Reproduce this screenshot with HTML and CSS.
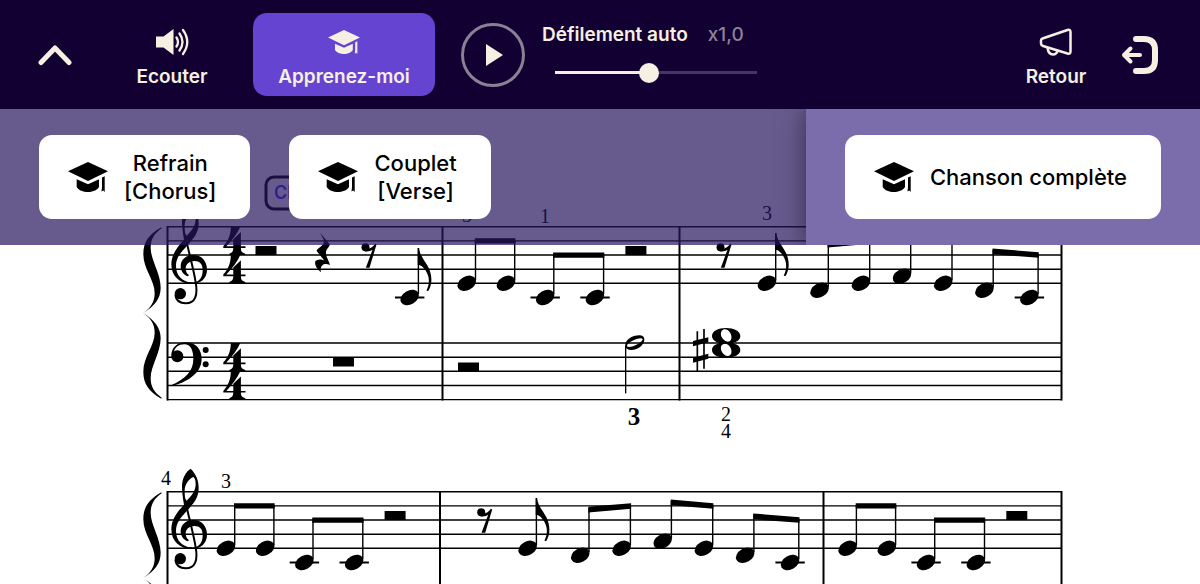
FILE: index.html
```html
<!DOCTYPE html>
<html lang="fr">
<head>
<meta charset="utf-8">
<meta name="viewport" content="width=device-width, initial-scale=1">
<title>Partition</title>
<link rel="stylesheet" href="styles.css">
</head>
<body>
<svg class="defs" width="0" height="0" aria-hidden="true">
  <defs>
    <symbol id="cap" viewBox="0 0 40 30">
      <path d="M0 9.3 20 0 40 9.3 20 19Z"/>
      <path d="M8.7 17.2 20 22.3 31 17.2V25C29 28.6 24 30 20 30 15 30 11 28.6 8.7 25Z"/>
      <path d="M34 15.4 36.7 14.2V30L35.3 28.4 33.5 29.6 34 25Z"/>
    </symbol>
    <ellipse id="head" rx="9.9" ry="6.9" transform="rotate(-29)"/>
    <g id="low"><use href="#head"/><path d="M-14.7-1H14.7V1H-14.7Z"/></g>
    <path id="rest" d="M0 0H21V9H0Z"/>
    <path id="flag" transform="scale(.33333)" d="M-2 0H2C5 35 39 50 39 95 39 110 33 125 29 129L24 128C33 110 35 90 23 70 15 57 7 51 2 51H-2Z"/>
    <g id="rest8" transform="scale(.33333)"><circle cx="12" cy="11" r="12"/><path d="M41 1 45 3 24 73H13L33 19C26 24 16 25 9 23L12 15C25 18 34 11 41 1Z"/></g>
    <path id="four" d="M7.5 0H17C14 7 9 13 3 19.6H10V12.5L17.6 5.2V19.6H22.2V21.3H17.6C17.6 24.500 18.5 26 22 27V28.3H6V27C9 26 10 24.500 10 21.3H0V19.6C5 14 7.500 8 7.500 0Z"/>
    <g id="treble" transform="scale(.33333)">
      <path fill-rule="evenodd" d="M182 26C200 45 206 62 206 85 206 112 192 130 174 149 150 174 138 190 138 212 138 240 155 260 184 262 208 264 218 248 218 226 218 206 209 198 193 198 178 198 168 208 167 218 167 230 171 236 177 240L174 244C160 240 152 228 152 214 152 194 168 180 190 180 214 180 231 198 231 224 231 250 212 267 184 267 150 267 124 244 124 208 124 178 142 156 162 134 158 112 156 92 156 80 156 55 168 34 182 26ZM190 51C176 56 163 75 164 95 164 105 165 115 168 124 185 108 197 92 197 72 197 62 195 54 190 51Z"/>
      <path class="line" stroke-width="6" d="M165 118C175 168 190 218 197 262 204 300 196 325 167 325 148 325 138 314 136 300"/>
      <circle cx="151" cy="296" r="17"/>
    </g>
    <g id="brace" transform="scale(.33333)">
      <path id="half-brace" d="M94 67C55 90 40 112 40 148 40 193 74 225 74 265 74 290 62 310 38 325 75 302 92 280 92 248 92 205 62 165 62 128 62 104 72 86 95 70Z"/>
      <use href="#half-brace" transform="matrix(1 0 0 -1 0 648)"/>
    </g>
    <path id="staff" class="line" stroke-width="1.4" d="M167 0H1062M167 14.2H1062M167 28.3H1062M167 42.5H1062M167 56.6H1062"/>
    <g id="notes-a">
      <use href="#head" x="0" y="283.3"/><use href="#head" x="39.2" y="283.3"/>
      <use href="#low" x="78.4" y="297.5"/><use href="#low" x="128.2" y="297.5"/>
      <path class="line" stroke-width="1.4" d="M8.7 280V240M47.9 280V240M87 294V254M136.8 294V254"/>
      <path d="M8 238.3H48.6V243.5H8ZM86.3 252.4H137.5V257.8H86.3Z"/>
      <use href="#rest" x="158.6" y="246"/>
    </g>
    <g id="notes-b">
      <use href="#rest8" x="-50.5" y="243.5"/>
      <use href="#head" x="0" y="283.3"/><use href="#head" x="52.6" y="290.3"/><use href="#head" x="94" y="283.3"/>
      <use href="#head" x="135" y="276.2"/><use href="#head" x="176.3" y="283.3"/><use href="#head" x="217.5" y="290.3"/><use href="#low" x="262.4" y="297.5"/>
      <path class="line" stroke-width="1.4" d="M8.7 280V233M61.3 287V243M102.7 280V240M143.7 273V236M185 280V240M226.2 287V250M271.1 294V254"/>
      <use href="#flag" x="8.7" y="233"/>
      <path d="M60.6 241.8 103.4 238.2V243.8L60.6 247.5ZM143 234.5 185.7 238.2V243.8L143 240.2ZM225.5 248.5 271.8 252.2V257.8L225.5 254.2Z"/>
    </g>
  </defs>
</svg>

<header class="toolbar">
  <button class="icon-button" type="button" aria-label="Replier">
    <svg width="34" height="22" viewBox="0 0 34 22"><path class="stroke" stroke-width="5" d="M3 18.5 17 4 31 18.5"/></svg>
  </button>
  <button class="tool listen" type="button">
    <svg width="34" height="28" viewBox="0 0 34 28"><path d="M1 8.5H8.5L18.5 1V27L8.5 19.5H1Z"/><path class="stroke" stroke-width="2.3" d="M21.500 9.5Q24.5 14 21.5 18.5M24.5 5.5Q30.5 14 24.5 22.5M28 2Q36.500 14 28 26"/></svg>
    <span>Ecouter</span>
  </button>
  <button class="tool active" type="button">
    <svg width="32" height="28" viewBox="0 -2 40 34"><use href="#cap" width="40" height="30"/></svg>
    <span>Apprenez-moi</span>
  </button>
  <button class="play" type="button" aria-label="Lecture">
    <svg width="18" height="22" viewBox="0 0 18 22"><path d="M1 0 18 11 1 22Z"/></svg>
  </button>
  <div class="speed">
    <div class="speed-head"><label for="speed">Défilement auto</label><output for="speed">x1,0</output></div>
    <input id="speed" type="range" min="0" max="100" value="46">
  </div>
  <button class="tool feedback" type="button">
    <svg width="34" height="28" viewBox="0 0 34 28"><path class="stroke" stroke-width="2.5" d="M3.5 10.5 28.5 2Q31.5 1 31.5 4V23.5Q31.5 26.5 28.5 25.5L4 18Q2 17 2 15.5V12.5Q2 11 3.5 10.5ZM8.5 20Q9.5 26.5 14 26.5 17.5 26.5 18.5 23"/></svg>
    <span>Retour</span>
  </button>
  <button class="icon-button" type="button" aria-label="Quitter">
    <svg width="38" height="40" viewBox="0 0 38 40"><path class="stroke" stroke-width="6" d="M15 4H23Q34 4 34 15V25Q34 36 23 36H15"/><path class="stroke" stroke-width="4" d="M19 20H3M9.5 13.5 3 20 9.5 26.5"/></svg>
  </button>
</header>

<main class="stage">
  <svg class="score" viewBox="0 109 1200 475" role="img" aria-label="Partition pour piano">
    <rect class="line" x="266" y="177" width="96" height="32" rx="8" stroke-width="3"/>
    <text class="section-name" x="274" y="199">Chorus</text>

    <g transform="translate(130 205)"><use href="#brace"/></g>
    <use href="#staff" y="226.7"/><use href="#staff" y="343"/>
    <path class="line" stroke-width="2" d="M167.5 226V400.5M442.5 226V400.5M679.5 226V400.5M1061.5 226V400.5"/>
    <g transform="translate(130 195)"><use href="#treble"/></g>
    <g transform="translate(130 205) scale(.33333)">
      <path d="M124 452C124 428 142 412 167 412 198 412 215 434 215 462 215 505 170 532 124 544L123 541C165 522 190 500 190 462 190 436 182 418 163 418 146 418 133 428 131 444Z"/>
      <circle cx="142" cy="454" r="18"/><circle cx="227" cy="435" r="9"/><circle cx="227" cy="478" r="9"/>
      <path d="M570 83 599 118C601 124 586 133 588 145 589 158 597 168 600 180 585 172 568 178 573 202 556 190 550 170 560 166 568 162 580 164 584 168L560 138C560 130 582 122 582 110 582 100 574 92 570 83Z"/>
    </g>
    <use href="#four" x="223.3" y="226.7"/><use href="#four" x="223.3" y="255"/>
    <use href="#four" x="223.3" y="343"/><use href="#four" x="223.3" y="371.3"/>
    <use href="#rest" x="255.5" y="246"/><use href="#rest8" x="361.5" y="243.5"/>
    <use href="#low" x="409.7" y="297.5"/><path class="line" stroke-width="1.4" d="M418.4 294V248"/><use href="#flag" x="418.4" y="248"/>
    <use href="#notes-a" x="466.8"/>
    <use href="#notes-b" x="767"/>
    <use href="#rest" x="333" y="357.5"/><use href="#rest" x="458" y="362.5"/>

    <g transform="translate(430 205) scale(.33333)">
      <path fill-rule="evenodd" d="M586 424C583 405 608 390 630 391 650 393 644 414 633 424 620 436 589 441 586 424ZM591 424C598 433 641 411 638 402 632 394 589 412 591 424Z"/>
      <path class="line" stroke-width="4" d="M587 422V565"/>
      <path class="line" stroke-width="5" d="M802 379V498M822 372V491"/>
      <path d="M789 408 835 397V412L789 424ZM789 458 835 446V461L789 473Z"/>
      <path fill-rule="evenodd" d="M846 393C846 378 864 369 888 369S931 378 931 393C931 404 921 411 908 414 921 418 931 424 931 435 931 450 912 458 888 458S846 450 846 435C846 424 856 418 869 414 856 411 846 404 846 393ZM875 378C867 390 880 410 894 410 909 409 907 386 894 376 886 371 879 373 875 378ZM875 421C867 433 880 454 894 453 909 452 907 428 894 419 886 414 879 416 875 421Z"/>
    </g>
    <g class="fingering">
      <text x="467" y="222">3</text><text x="545" y="223">1</text><text x="767" y="220">3</text>
      <text class="strong" x="634" y="425">3</text>
      <text><tspan x="726" y="421">2</tspan><tspan x="726" y="438">4</tspan></text>
      <text x="166" y="485">4</text><text x="226" y="488">3</text>
    </g>

    <g transform="translate(0 265)">
      <g transform="translate(130 205)"><use href="#brace"/></g>
      <use href="#staff" y="226.7"/>
      <path class="line" stroke-width="2" d="M167.5 226V400M440 226V400M823.5 226V400M1061.5 226V400"/>
      <g transform="translate(130 195)"><use href="#treble"/></g>
      <use href="#notes-a" x="226"/><use href="#notes-b" x="527.7"/><use href="#notes-a" x="847.7"/>
    </g>
  </svg>

  <section class="sections" aria-label="Parties de la chanson">
    <div class="parts">
      <button class="card" type="button"><svg width="40" height="30"><use href="#cap"/></svg><span>Refrain<br>[Chorus]</span></button>
      <button class="card" type="button"><svg width="40" height="30"><use href="#cap"/></svg><span>Couplet<br>[Verse]</span></button>
    </div>
    <div class="whole">
      <button class="card" type="button"><svg width="40" height="30"><use href="#cap"/></svg><span>Chanson complète</span></button>
    </div>
  </section>
</main>
</body>
</html>
```

FILE: styles.css
```css
* { box-sizing: border-box; }

body {
  margin: 0;
  background: #fff;
  font-family: Inter, "Liberation Sans", sans-serif;
  overflow-x: hidden;
}

button {
  margin: 0;
  padding: 0;
  border: 0;
  background: none;
  color: inherit;
  font: inherit;
  cursor: pointer;
}

svg { display: block; fill: currentColor; }
.defs { position: absolute; }

.stroke,
.line {
  fill: none;
  stroke: currentColor;
}
.stroke { stroke-linecap: round; stroke-linejoin: round; }

.toolbar {
  display: flex;
  align-items: center;
  padding: 13px 41px 13px 38px;
  background: #120033;
  color: #f5f0e1;
  font-size: 19px;
  font-weight: 600;
  line-height: 24px;
}

.tool {
  display: flex;
  flex-direction: column;
  align-items: center;
  gap: 9px;
  padding: 15px 18px 7px;
  border-radius: 14px;
}
.listen { width: 106px; margin-left: 47px; }
.active { width: 182px; margin-left: 28px; background: #6544d1; }
.feedback { width: 98px; margin-left: auto; margin-right: 16px; }

.play {
  display: grid;
  place-items: center;
  flex: none;
  width: 64px;
  height: 64px;
  margin: 0 17px 0 26px;
  padding-left: 2px;
  border: 3px solid #8c8094;
  border-radius: 50%;
}

.speed-head { display: flex; gap: 20px; }
.speed-head output { color: #8c8299; font-weight: 500; }

.speed input {
  display: block;
  width: 202px;
  height: 20px;
  margin: 16px 0 4px 13px;
  appearance: none;
  background: linear-gradient(to right, #f5f0e1 47%, #493264 47%) center / 100% 3px no-repeat;
}
.speed input::-webkit-slider-thumb {
  appearance: none;
  width: 20px;
  height: 20px;
  border-radius: 50%;
  background: #f5f0e1;
}

.stage { position: relative; color: #000; }
.score { width: 100%; height: auto; }
.section-name { fill: #4038ff; font-size: 18px; font-weight: 600; }
.fingering {
  font-family: "Liberation Serif", serif;
  font-size: 20px;
  text-anchor: middle;
}
.strong { font-size: 25px; font-weight: 700; }

.sections {
  position: absolute;
  top: 0;
  left: 0;
  right: 0;
  display: flex;
  overflow: hidden;
}
.parts {
  display: flex;
  flex: 1;
  gap: 39px;
  padding: 26px 39px;
  background: rgba(38, 22, 94, 0.7);
}
.whole {
  padding: 26px 39px;
  background: #7b6dab;
  box-shadow: 0 0 24px rgba(0, 0, 0, 0.5);
}
.card {
  display: flex;
  align-items: center;
  gap: 16px;
  min-height: 84px;
  padding: 0 34px 0 29px;
  border-radius: 13px;
  background: #fff;
  font-size: 22px;
  font-weight: 500;
  line-height: 28px;
}
```
